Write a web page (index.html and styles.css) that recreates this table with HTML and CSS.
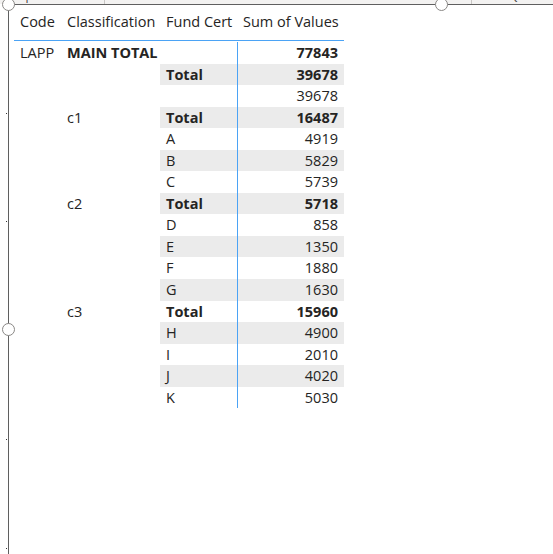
FILE: index.html
```html
<!DOCTYPE html>
<html lang="en">

<head>
    <meta charset="UTF-8">
    <title>Matrix visual</title>
    <link rel="stylesheet" href="styles.css">
</head>

<body>
    <div class="ribbon">
        <span class="label clip">Clipboard</span>
        <span class="sep"></span>
        <span class="label data">Data</span>
        <span class="sep right"></span>
        <span class="label">Queries</span>
    </div>

    <div class="canvas">
        <span class="handle top-left"></span>
        <span class="handle top-mid"></span>
        <span class="handle mid-left"></span>
        <span class="tick t1"></span>
        <span class="tick t2"></span>
        <span class="tick t3"></span>
        <span class="tick t4"></span>

        <div class="matrix">
            <div class="row head">
                <div class="cell">Code</div>
                <div class="cell">Classification</div>
                <div class="cell">Fund Cert</div>
                <div class="cell">Sum of Values</div>
            </div>

            <div class="body">
                <div class="row">
                    <div class="cell">LAPP</div>
                    <div class="cell bold wide">MAIN TOTAL</div>
                    <div class="cell fc"></div>
                    <div class="cell val bold">77843</div>
                </div>
                <div class="row alt">
                    <div class="cell"></div>
                    <div class="cell"></div>
                    <div class="cell fc bold">Total</div>
                    <div class="cell val bold">39678</div>
                </div>
                <div class="row">
                    <div class="cell"></div>
                    <div class="cell"></div>
                    <div class="cell fc"></div>
                    <div class="cell val">39678</div>
                </div>
                <div class="row alt">
                    <div class="cell"></div>
                    <div class="cell">c1</div>
                    <div class="cell fc bold">Total</div>
                    <div class="cell val bold">16487</div>
                </div>
                <div class="row">
                    <div class="cell"></div>
                    <div class="cell"></div>
                    <div class="cell fc">A</div>
                    <div class="cell val">4919</div>
                </div>
                <div class="row alt">
                    <div class="cell"></div>
                    <div class="cell"></div>
                    <div class="cell fc">B</div>
                    <div class="cell val">5829</div>
                </div>
                <div class="row">
                    <div class="cell"></div>
                    <div class="cell"></div>
                    <div class="cell fc">C</div>
                    <div class="cell val">5739</div>
                </div>
                <div class="row alt">
                    <div class="cell"></div>
                    <div class="cell">c2</div>
                    <div class="cell fc bold">Total</div>
                    <div class="cell val bold">5718</div>
                </div>
                <div class="row">
                    <div class="cell"></div>
                    <div class="cell"></div>
                    <div class="cell fc">D</div>
                    <div class="cell val">858</div>
                </div>
                <div class="row alt">
                    <div class="cell"></div>
                    <div class="cell"></div>
                    <div class="cell fc">E</div>
                    <div class="cell val">1350</div>
                </div>
                <div class="row">
                    <div class="cell"></div>
                    <div class="cell"></div>
                    <div class="cell fc">F</div>
                    <div class="cell val">1880</div>
                </div>
                <div class="row alt">
                    <div class="cell"></div>
                    <div class="cell"></div>
                    <div class="cell fc">G</div>
                    <div class="cell val">1630</div>
                </div>
                <div class="row">
                    <div class="cell"></div>
                    <div class="cell">c3</div>
                    <div class="cell fc bold">Total</div>
                    <div class="cell val bold">15960</div>
                </div>
                <div class="row alt">
                    <div class="cell"></div>
                    <div class="cell"></div>
                    <div class="cell fc">H</div>
                    <div class="cell val">4900</div>
                </div>
                <div class="row">
                    <div class="cell"></div>
                    <div class="cell"></div>
                    <div class="cell fc">I</div>
                    <div class="cell val">2010</div>
                </div>
                <div class="row alt">
                    <div class="cell"></div>
                    <div class="cell"></div>
                    <div class="cell fc">J</div>
                    <div class="cell val">4020</div>
                </div>
                <div class="row">
                    <div class="cell"></div>
                    <div class="cell"></div>
                    <div class="cell fc">K</div>
                    <div class="cell val">5030</div>
                </div>
            </div>
        </div>
    </div>
</body>

</html>
```

FILE: styles.css
```css
body {
    margin: 0;
    background-color: #fff;
    font-family: "Segoe UI", "Open Sans", sans-serif;
    color: #252423;
    height: 554px;
    overflow: hidden;
}

.ribbon {
    height: 4px;
    background-color: #f3f2f1;
    display: flex;
    overflow: hidden;
    font-size: 12px;
    line-height: 12px;
    color: #444;
}

.ribbon .label {
    margin-top: -10px;
}

.ribbon .clip {
    margin-left: 12px;
    width: 100px;
}

.ribbon .data {
    margin-left: 181px;
    width: 202px;
}

.ribbon .sep {
    width: 1px;
    background-color: #c8c6c4;
}

.ribbon .sep.right {
    margin-right: 37px;
}

.canvas {
    position: relative;
    margin-left: 8px;
    height: 549px;
    border-top: 1px solid #5f5f5f;
    border-left: 1px solid #5f5f5f;
}

.handle {
    position: absolute;
    width: 11px;
    height: 11px;
    border: 1px solid #8a8886;
    border-radius: 50%;
    background-color: #fff;
}

.handle.top-left {
    left: -7px;
    top: -7px;
}

.handle.top-mid {
    left: 426px;
    top: -7px;
}

.handle.mid-left {
    left: -7px;
    top: 318px;
}

.tick {
    position: absolute;
    left: -3px;
    width: 1px;
    height: 1px;
    background-color: #333;
}

.t1 { top: 108px; }
.t2 { top: 216px; }
.t3 { top: 434px; }
.t4 { top: 543px; }

.matrix {
    margin-left: 5px;
    width: 330px;
    font-size: 14.5px;
}

.row {
    display: grid;
    grid-template-columns: 47px 99px 77px 107px;
    height: 21.56px;
    line-height: 21.56px;
}

.row.head {
    height: 35px;
    line-height: 34px;
    border-bottom: 1px solid #4ba3f5;
}

.body {
    padding-top: 1px;
}

.cell {
    padding: 0 6px;
    white-space: nowrap;
}

.cell.wide {
    overflow: visible;
    width: 0;
}

.cell.val {
    text-align: right;
}

.body .cell.val {
    border-left: 1px solid #4ba3f5;
}

.row.alt .cell.fc,
.row.alt .cell.val {
    background-color: #ebebeb;
}

.bold {
    font-weight: bold;
}
```
